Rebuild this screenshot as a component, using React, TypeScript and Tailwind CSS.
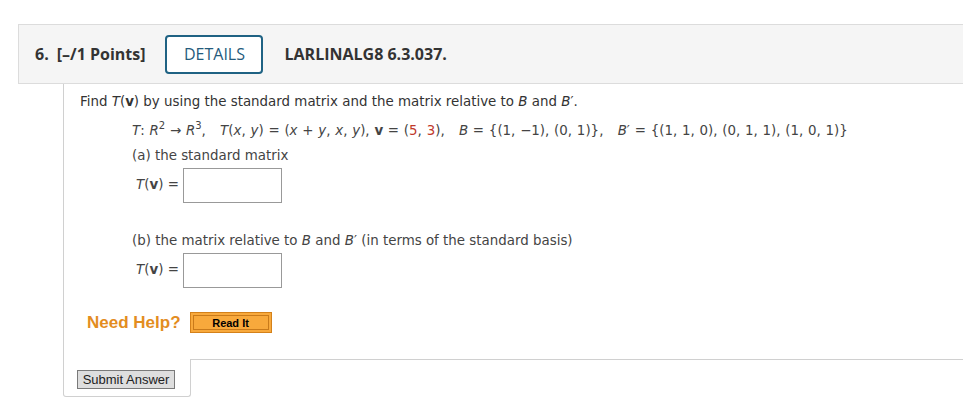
import React from "react";

const verdana = { fontFamily: '"DejaVu Sans", Verdana, sans-serif' };

function AnswerRow() {
  return (
    <div className="flex items-center pl-[56px]">
      <span className="text-[13.4px] text-[#444]" style={verdana}>
        <i>T</i>(<b>v</b>) =
      </span>
      <div className="ml-[4px] h-[35px] w-[99px] border border-[#999] bg-white" />
    </div>
  );
}

export default function App() {
  return (
    <div className="min-h-[413px] bg-white pt-6 pl-[18px]">
      {/* question header */}
      <div
        className="flex h-[60px] items-center border border-r-0 border-[#dcdcdc] bg-[#f5f5f5] pl-[16px] text-[#333]"
        style={{ fontFamily: '"Open Sans", sans-serif' }}
      >
        <span className="text-[16px] font-bold">6.</span>
        <span className="ml-[8px] text-[16px] font-bold">[–/1 Points]</span>
        <button
          type="button"
          className="ml-[20px] h-[39px] w-[98px] rounded-[4px] border-2 border-[#1f6283] bg-white text-[16px] text-[#255b7c]"
        >
          DETAILS
        </button>
        <span className="ml-[21px] text-[16px] font-bold">LARLINALG8 6.3.037.</span>
      </div>

      <div className="ml-[45px]">
        <div className="border-l border-[#d0d0d0] pt-[8px] pb-[23px] pl-[16px] text-[13.4px] text-[#444]" style={verdana}>
          <p className="flex h-[20px] items-center text-[#333]">
            Find&nbsp;<i>T</i>(<b>v</b>) by using the standard matrix and the matrix relative to&nbsp;<i>B</i>&nbsp;and&nbsp;<i>B</i>′.
          </p>
          <p className="mt-[9px] flex h-[20px] items-center whitespace-pre pl-[52px] [word-spacing:0.5px]">
            <i>T</i>: <i>R</i>
            <sup className="text-[10px]">2</sup> → <i>R</i>
            <sup className="text-[10px]">3</sup>,   <i>T</i>(<i>x</i>, <i>y</i>) = (<i>x</i> + <i>y</i>, <i>x</i>, <i>y</i>), <b>v</b> = (
            <span className="text-[#c0392b]">5</span>, <span className="text-[#c0392b]">3</span>),   <i>B</i> = {"{"}(1, −1), (0, 1){"}"},   <i>B</i>′ = {"{"}(1, 1, 0), (0, 1, 1), (1, 0, 1){"}"}
          </p>
          <p className="mt-[5px] flex h-[20px] items-center pl-[52px]">(a) the standard matrix</p>
          <div className="mt-[2px]">
            <AnswerRow />
          </div>
          <p className="mt-[28px] flex h-[20px] items-center pl-[52px]">
            (b) the matrix relative to&nbsp;<i>B</i>&nbsp;and&nbsp;<i>B</i>′ (in terms of the standard basis)
          </p>
          <div className="mt-[2px]">
            <AnswerRow />
          </div>
          <div className="mt-[22px] flex items-center pl-[7px]" style={{ fontFamily: '"Liberation Sans", Arial, sans-serif' }}>
            <span className="text-[17px] font-bold text-[#e38d1f]">Need Help?</span>
            <button
              type="button"
              className="ml-[9px] h-[21px] w-[82px] border border-[#d4811a] bg-[#f8a93c] p-[2px]"
            >
              <span className="flex h-full w-full items-center justify-center border border-[#c97a1a] text-[11px] font-bold text-black">
                Read It
              </span>
            </button>
          </div>
        </div>

        <div className="flex">
          <div className="flex w-[128px] rounded-bl-[3px] rounded-br-[3px] border-r border-b border-l border-[#d0d0d0] pt-[11px] pb-[7px] pl-[13px]">
            <button
              type="button"
              className="h-[19px] w-[98px] border border-[#7a7a7a] bg-[#dedede] text-[13px] leading-[17px] text-[#222]"
              style={{ fontFamily: '"Liberation Sans", Arial, sans-serif' }}
            >
              Submit Answer
            </button>
          </div>
          <div className="flex-1 border-t border-[#d0d0d0]" />
        </div>
      </div>
    </div>
  );
}
